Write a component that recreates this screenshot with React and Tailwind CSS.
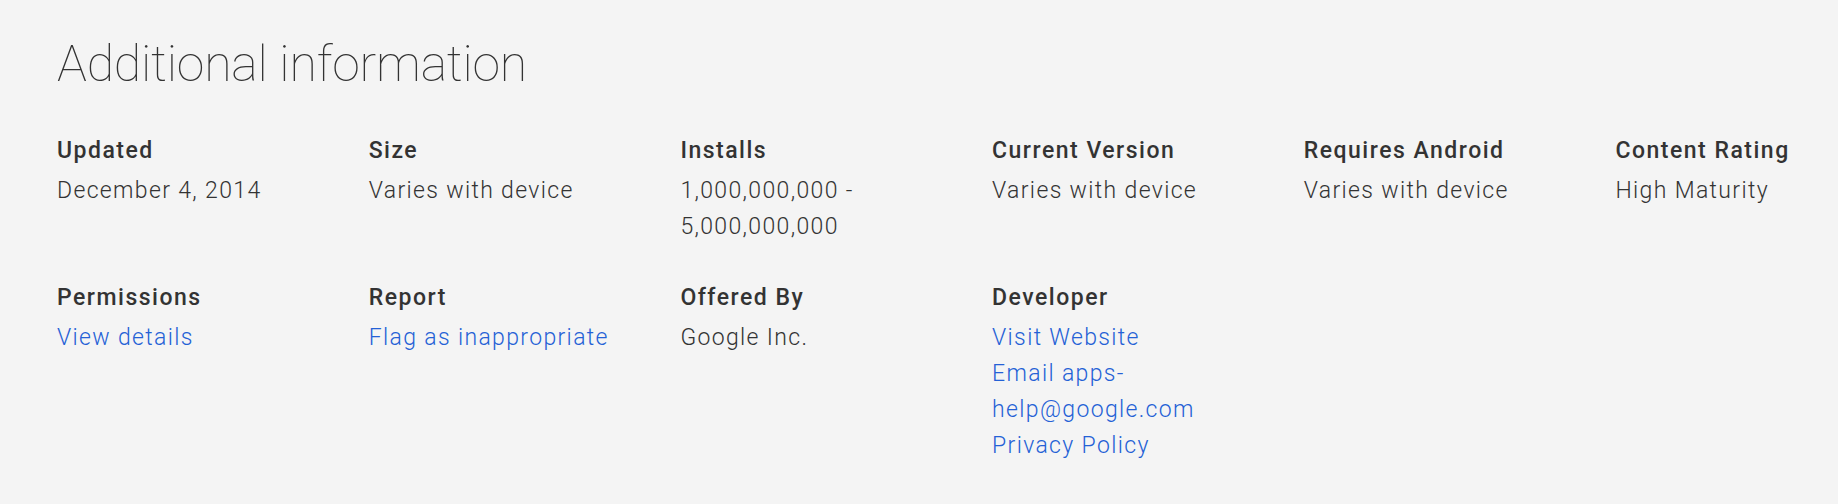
const rows = [
  [
    { label: "Updated", value: ["December 4, 2014"] },
    { label: "Size", value: ["Varies with device"] },
    { label: "Installs", value: ["1,000,000,000 -", "5,000,000,000"] },
    { label: "Current Version", value: ["Varies with device"] },
    { label: "Requires Android", value: ["Varies with device"] },
    { label: "Content Rating", value: ["High Maturity"] },
  ],
  [
    { label: "Permissions", links: ["View details"] },
    { label: "Report", links: ["Flag as inappropriate"] },
    { label: "Offered By", value: ["Google Inc."] },
    { label: "Developer", links: ["Visit Website", "Email apps-\u200Bhelp@google.com", "Privacy Policy"] },
  ],
];

function Item({ item }) {
  return (
    <div className="flex flex-col">
      <div className="text-[23px] leading-[36px] tracking-[1.5px] font-medium text-[#333]">{item.label}</div>
      <div className="mt-1 text-[23px] leading-[36px] tracking-[1.35px] font-light">
        {item.value &&
          item.value.map((v) => (
            <div key={v} className="text-[#333]">{v}</div>
          ))}
        {item.links &&
          item.links.map((l) => (
            <a key={l} href="#" className="block w-[270px] text-[#2461d6]">{l}</a>
          ))}
      </div>
    </div>
  );
}

export default function App() {
  return (
    <div className="min-h-screen w-full bg-[#f4f4f4] font-['Roboto',sans-serif] pl-[57px] pt-[34px] overflow-hidden">
      <h1 className="text-[50px] leading-[60px] tracking-[-0.2px] font-thin text-[#333]">Additional information</h1>
      <div className="mt-[39px] grid grid-cols-[repeat(6,311.7px)] gap-y-[35px]">
        {rows.flat().map((item) => (
          <Item key={item.label} item={item} />
        ))}
      </div>
    </div>
  );
}
